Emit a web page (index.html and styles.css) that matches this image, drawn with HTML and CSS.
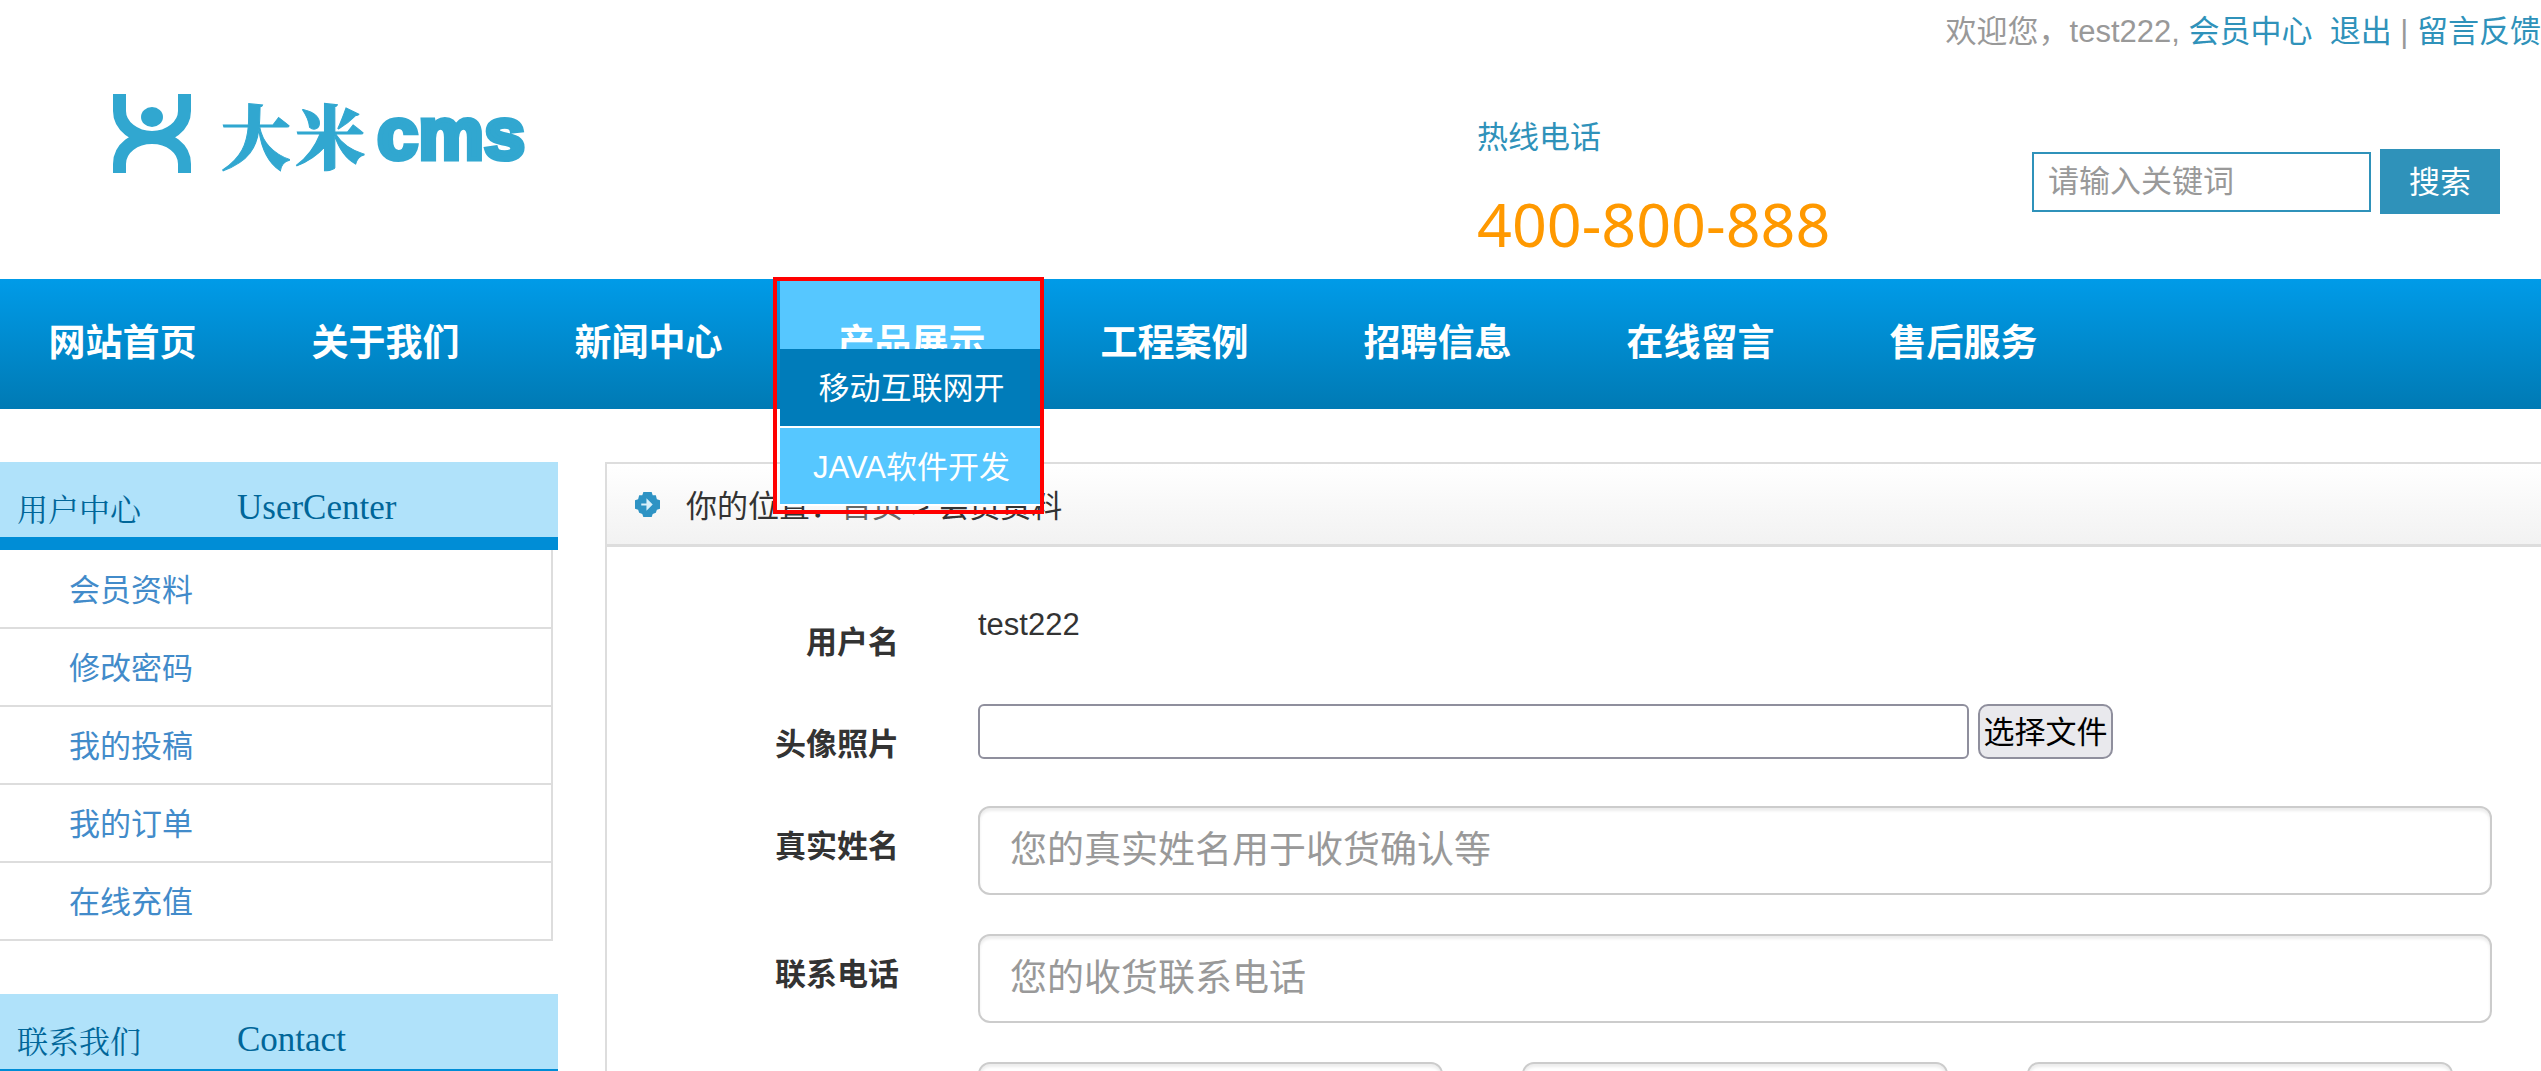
FILE: index.html
```html
<!DOCTYPE html>
<html lang="zh-CN">
  <head>
    <meta charset="UTF-8" />
    <title>会员资料 - 大米CMS</title>
    <link rel="stylesheet" href="styles.css">
  </head>
  <body>
    <div class="topbar">
      <span>欢迎您，test222, <a href="#">会员中心</a>&nbsp; <a href="#">退出</a> | <a href="#">留言反馈</a></span>
    </div>

    <header class="header">
      <a class="logo" href="#">
        <svg class="logo-mark" viewBox="0 0 78 79" aria-hidden="true">
          <path d="M6.500 0V17C6.500 32 22 43.500 39 43.500S71.500 32 71.500 17V0M6.500 79V70C6.500 54 22 43.500 39 43.500S71.500 54 71.500 70V79" fill="none" stroke="#31a7d0" stroke-width="13" />
          <ellipse cx="39" cy="23" rx="11" ry="10" fill="#31a7d0" />
        </svg>
        <span class="logo-cn"><span>大</span><span>米</span></span>
        <span class="logo-en">cms</span>
      </a>
      <div class="hotline">
        <p class="hotline-title">热线电话</p>
        <p class="hotline-number">400-800-888</p>
      </div>
      <form class="search">
        <input type="text" class="search-text" placeholder="请输入关键词" aria-label="请输入关键词" />
        <button type="button" class="search-btn">搜索</button>
      </form>
    </header>

    <nav class="nav">
      <ul class="menu">
        <li><a href="#">网站首页</a></li>
        <li><a href="#">关于我们</a></li>
        <li><a href="#">新闻中心</a></li>
        <li class="open">
          <a href="#">产品展示</a>
          <ul class="submenu">
            <li><a href="#">移动互联网开</a></li>
            <li class="current"><a href="#">JAVA软件开发</a></li>
          </ul>
          <span class="mark"></span>
        </li>
        <li><a href="#">工程案例</a></li>
        <li><a href="#">招聘信息</a></li>
        <li><a href="#">在线留言</a></li>
        <li><a href="#">售后服务</a></li>
      </ul>
    </nav>

    <div class="content">
      <aside class="sidebar">
        <h3 class="side-title"><span>用户中心</span><span class="en">UserCenter</span></h3>
        <ul class="side-list">
          <li><a href="#">会员资料</a></li>
          <li><a href="#">修改密码</a></li>
          <li><a href="#">我的投稿</a></li>
          <li><a href="#">我的订单</a></li>
          <li><a href="#">在线充值</a></li>
        </ul>
        <h3 class="side-title"><span>联系我们</span><span class="en">Contact</span></h3>
      </aside>

      <main class="panel">
        <div class="crumb">
          <svg class="crumb-icon" viewBox="0 0 24 24" aria-hidden="true">
            <path d="M8 0h8l1 3h3l1 4 3 1v8l-3 1-1 3-3 1-1 3H8l-1-3-3-1-1-3-3-1V8l3-1 1-4h3z" fill="#2e93c4" />
            <path d="M6 11h5V6l6 6-6 6v-5H6z" fill="#d9f0fa" />
          </svg>
          <span class="crumb-text">你的位置：<a href="#">首页</a> &gt; 会员资料</span>
        </div>

        <form class="profile">
          <div class="form-group">
            <span class="label">用户名</span>
            <div class="value">test222</div>
          </div>
          <div class="form-group">
            <label class="label" for="avatar">头像照片</label>
            <div class="file-row">
              <input type="text" id="avatar" class="file-text" />
              <button type="button" class="file-btn">选择文件</button>
            </div>
          </div>
          <div class="form-group">
            <label class="label" for="realname">真实姓名</label>
            <input type="text" id="realname" class="control" placeholder="您的真实姓名用于收货确认等" />
          </div>
          <div class="form-group">
            <label class="label" for="tel">联系电话</label>
            <input type="tel" id="tel" class="control" placeholder="您的收货联系电话" />
          </div>
          <div class="form-group">
            <span class="label"></span>
            <div class="area-row">
              <select class="control province" aria-label="省"></select>
              <select class="control" aria-label="市"></select>
              <select class="control" aria-label="区"></select>
            </div>
          </div>
        </form>
      </main>
    </div>
  </body>
</html>
```

FILE: styles.css
```css
* {
  box-sizing: border-box;
}
html {
  height: 100%;
  overflow: hidden;
}
body {
  margin: 0;
  height: 100%;
  overflow: hidden;
  font-family: "Liberation Sans", "Noto Sans CJK SC", sans-serif;
  font-size: 31px;
  line-height: 45px;
  color: #333;
  background: #fff;
}
ul,
p,
h3 {
  margin: 0;
  padding: 0;
  list-style: none;
}
a {
  text-decoration: none;
}
input,
button,
select {
  font-family: inherit;
  font-size: 31px;
  margin: 0;
}
input::placeholder {
  color: #999;
  opacity: 1;
}

/* top */
.topbar {
  display: flex;
  justify-content: flex-end;
  height: 62px;
  line-height: 64px;
  color: #999;
  white-space: nowrap;
}
.topbar a {
  color: #2f92ba;
}
.header {
  display: flex;
  align-items: flex-start;
  height: 217px;
  padding: 0 41px 0 113px;
}
.logo {
  display: flex;
  align-items: center;
  margin-top: 31px;
  height: 80px;
  color: #31a7d0;
}
.logo-mark {
  width: 78px;
  height: 79px;
  margin-right: 30px;
}
.logo-cn {
  display: flex;
  gap: 4px;
  margin-right: 12px;
  font-family: "Noto Serif CJK SC", "Noto Sans CJK SC", serif;
  font-size: 70px;
  font-weight: 900;
  -webkit-text-stroke: 1px #31a7d0;
}
.logo-en {
  font-family: "Liberation Sans Narrow", "Liberation Sans", sans-serif;
  font-size: 74px;
  font-weight: bold;
  -webkit-text-stroke: 5px #31a7d0;
}
.hotline {
  width: 555px;
  margin-left: auto;
  padding-top: 53px;
}
.hotline-title {
  color: #2f92ba;
}
.hotline-number {
  margin-top: 20px;
  font-family: "Noto Sans", sans-serif;
  font-size: 61px;
  line-height: 88px;
  color: #f90;
}
.search {
  display: flex;
  align-items: center;
  gap: 9px;
  margin-top: 87px;
}
.search-text {
  width: 339px;
  height: 60px;
  padding: 0 14px;
  border: 2px solid #2f92ba;
}
.search-btn {
  width: 120px;
  height: 65px;
  padding: 0 0 4px;
  border: none;
  background: #2f92ba;
  color: #fff;
}

/* nav */
.nav {
  height: 130px;
  background: linear-gradient(#009be8, #007ab4);
}
.menu {
  display: flex;
  margin-left: -9px;
}
.menu > li {
  position: relative;
  width: 263px;
  height: 130px;
}
.menu > li > a {
  display: block;
  font-size: 37px;
  font-weight: bold;
  line-height: 130px;
  text-align: center;
  color: #fff;
}
.menu > .open {
  background: #56c7ff;
}
.submenu {
  position: absolute;
  top: 70px;
  left: 0;
  width: 100%;
  z-index: 2;
}
.submenu li {
  height: 79px;
  background: #007cba;
  border-bottom: 2px solid #fff;
}
.submenu .current {
  height: 78px;
  background: #56c7ff;
}
.submenu a {
  display: block;
  line-height: 80px;
  text-align: center;
  color: #fff;
}
/* frame round the open menu */
.mark {
  position: absolute;
  top: -2px;
  left: -7px;
  width: 271px;
  height: 237px;
  border: 4px solid #f00;
  z-index: 3;
  pointer-events: none;
}

/* content */
.content {
  display: flex;
  align-items: stretch;
  gap: 47px;
  margin-top: 53px;
}
.sidebar {
  width: 558px;
  flex: none;
}
.side-title {
  display: flex;
  height: 88px;
  padding: 8px 17px 0;
  border-bottom: 13px solid #008dd6;
  background: #b0e2fa;
  font-family: "Noto Serif CJK SC", "Noto Sans CJK SC", serif;
  font-size: 31px;
  font-weight: normal;
  line-height: 75px;
  color: #006699;
}
.side-title span {
  width: 220px;
  white-space: nowrap;
}
.side-title .en {
  font-family: "Liberation Serif", serif;
  font-size: 35px;
}
.side-list {
  width: 553px;
  margin-bottom: 53px;
  padding-top: 1px;
  border-right: 2px solid #ddd;
}
.side-list li {
  height: 78px;
  border-bottom: 2px solid #ddd;
}
.side-list a {
  display: block;
  padding-left: 69px;
  line-height: 79px;
  color: #428bca;
}
.panel {
  flex: 1;
  border: 2px solid #ddd;
  border-width: 2px 0 0 2px;
}
.crumb {
  display: flex;
  align-items: center;
  height: 83px;
  padding-left: 28px;
  background: linear-gradient(#fff, #f2f2f2);
  border-bottom: 3px solid #ddd;
}
.crumb-icon {
  width: 25px;
  height: 25px;
  margin-right: 26px;
}
.crumb-text {
  padding-top: 4px;
}
.crumb a {
  color: #666;
}

/* profile form */
.profile {
  display: grid;
  gap: 39px;
  padding: 55px 49px 0 0;
  align-content: start;
}
.form-group {
  display: grid;
  grid-template-columns: 292px 1fr;
  gap: 79px;
  align-items: start;
}
.label {
  padding-top: 18px;
  font-weight: bold;
  text-align: right;
}
.file-row {
  display: flex;
  gap: 9px;
}
.file-text {
  flex: 0 1 991px;
  height: 55px;
  border: 2px solid #8f8f9d;
  border-radius: 6px;
}
.file-btn {
  width: 135px;
  height: 55px;
  padding: 0 0 4px;
  border: 2px solid #8f8f9d;
  border-radius: 10px;
  background: #e9e9ed;
  color: #000;
}
.control {
  width: 100%;
  height: 89px;
  padding: 0 30px;
  border: 2px solid #ccc;
  border-radius: 12px;
  background: #fff;
  box-shadow: inset 0 3px 3px rgba(0, 0, 0, 0.075);
  font-size: 37px;
  appearance: none;
}
.area-row {
  display: flex;
  gap: 79px;
}
.area-row .control {
  flex: 0 1 426px;
}
.area-row .province {
  flex-basis: 465px;
}
```
